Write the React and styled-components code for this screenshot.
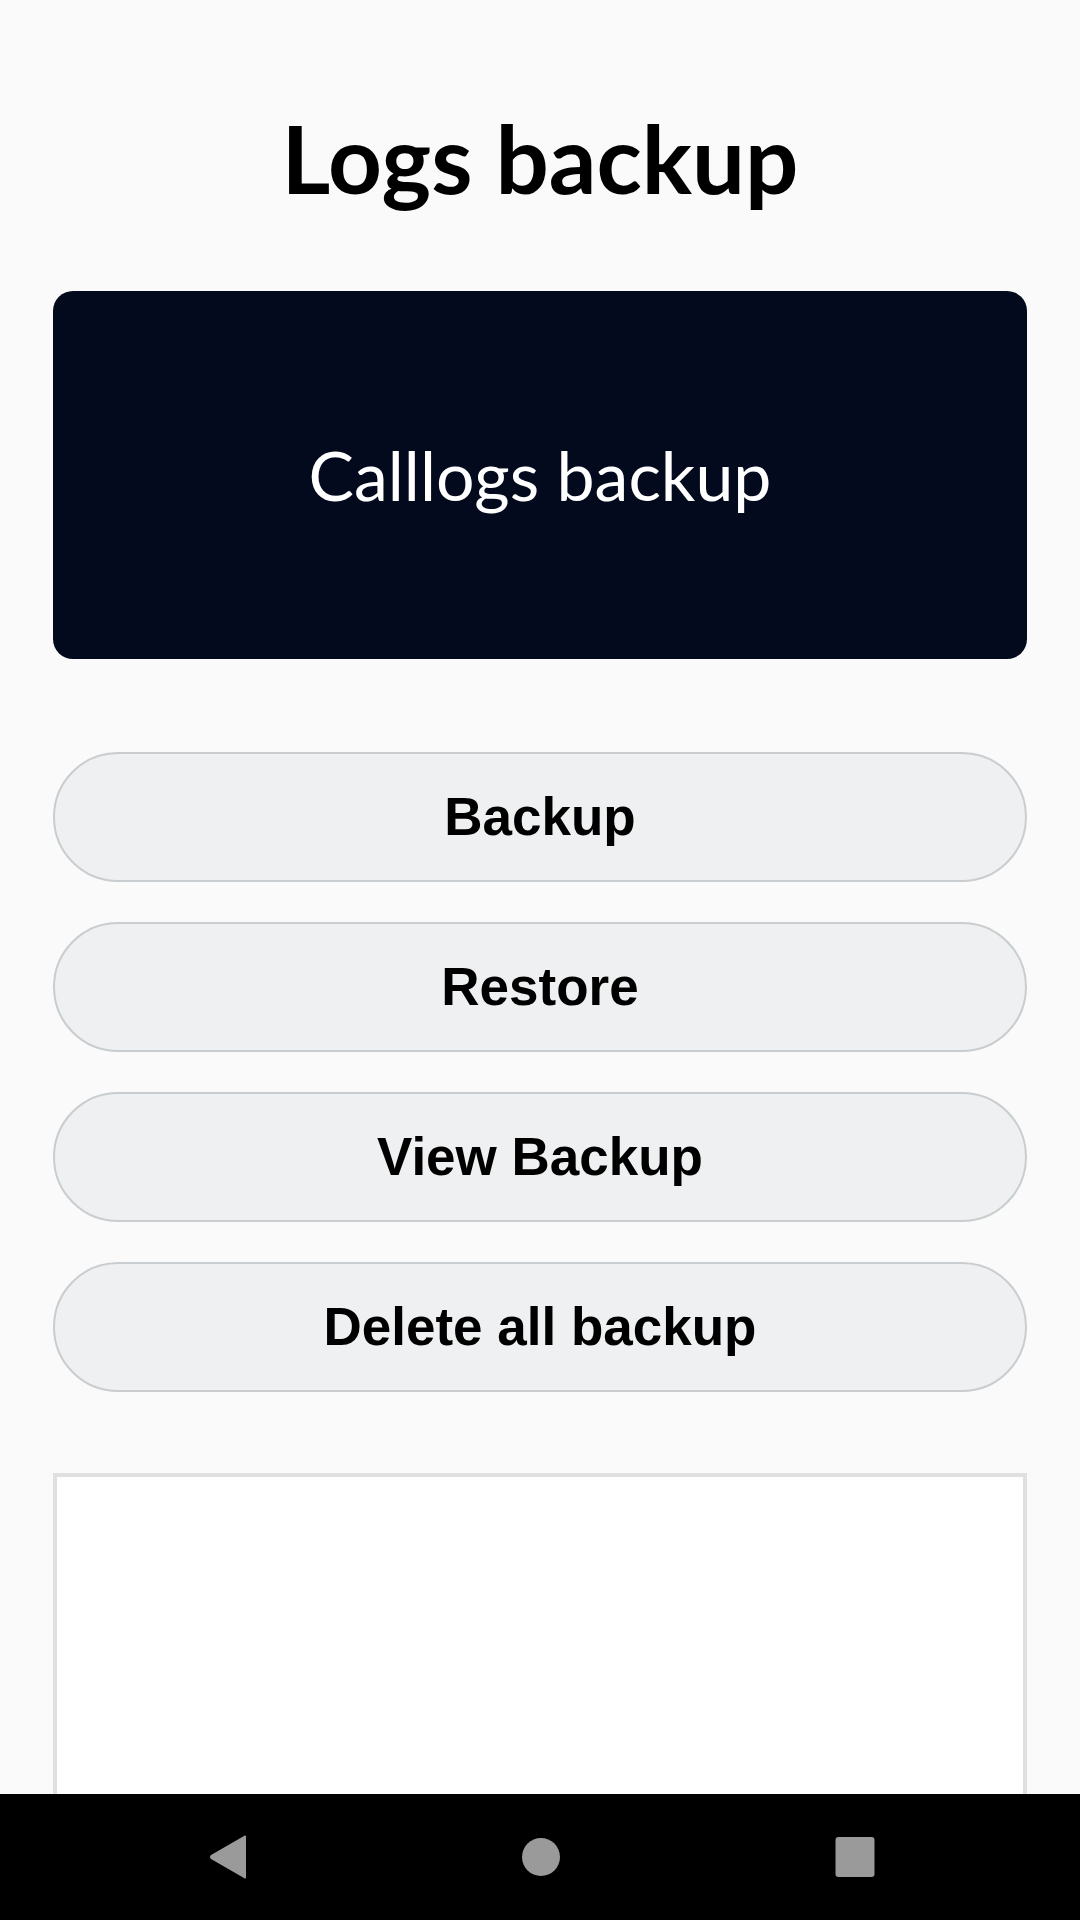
import styled, { createGlobalStyle } from 'styled-components';

const GlobalStyle = createGlobalStyle`
  html, body {
    margin: 0;
    padding: 0;
    background: #fafafa;
  }
  * {
    box-sizing: border-box;
  }
`;

const actions = ['Backup', 'Restore', 'View Backup', 'Delete all backup'];

const App = () => {
    return (
        <>
            <GlobalStyle />
            <Screen>
                <Content>
                    <Title>Logs backup</Title>
                    <Banner>
                        <BannerText>Calllogs backup</BannerText>
                    </Banner>
                    <ButtonList>
                        {actions.map((label) => (
                            <ActionButton key={label} type="button">{label}</ActionButton>
                        ))}
                    </ButtonList>
                    <ResultBox />
                </Content>
                <NavBar>
                    <NavIcon width="38" height="44" viewBox="0 0 38 44">
                        <path d="M37 1 L37 43 Q36 44 35 43 L2 24 Q0 22 2 20 L35 1 Q36 0 37 1 Z" fill="#9a9a9a" />
                    </NavIcon>
                    <NavIcon width="40" height="40" viewBox="0 0 40 40">
                        <circle cx="20" cy="20" r="19" fill="#9a9a9a" />
                    </NavIcon>
                    <NavIcon width="40" height="40" viewBox="0 0 40 40">
                        <rect x="0.5" y="0" width="39" height="40" rx="3" fill="#9a9a9a" />
                    </NavIcon>
                </NavBar>
            </Screen>
        </>
    );
};

const Screen = styled.div`
  width: 1080px;
  height: 1920px;
  display: flex;
  flex-direction: column;
  background: #fafafa;
  overflow: hidden;
`;

const Content = styled.main`
  flex: 1;
  min-height: 0;
  display: flex;
  flex-direction: column;
  padding: 102px 53px 0;
  overflow: hidden;

  & > * {
    flex-shrink: 0;
  }
`;

const Title = styled.h1`
  margin: 0;
  font-family: Lato, "Noto Sans", sans-serif;
  font-weight: 700;
  font-size: 94px;
  line-height: 1.2;
  color: #000;
  text-align: center;
`;

const Banner = styled.section`
  margin-top: 76px;
  height: 368px;
  border-radius: 20px;
  background: #040a1e;
  display: flex;
  align-items: center;
  justify-content: center;
`;

const BannerText = styled.span`
  font-family: Lato, "Noto Sans", sans-serif;
  font-weight: 400;
  font-size: 68px;
  color: #fff;
`;

const ButtonList = styled.div`
  margin-top: 93px;
  display: flex;
  flex-direction: column;
  gap: 40px;
`;

const ActionButton = styled.button`
  height: 130px;
  width: 100%;
  border: 2.5px solid #c9cdcf;
  border-radius: 65px;
  background: #eef0f1;
  font-family: "Liberation Sans", Arial, sans-serif;
  font-weight: 700;
  font-size: 53px;
  color: #000;
  cursor: pointer;
`;

const ResultBox = styled.div`
  margin-top: 81px;
  flex: 1 0 auto;
  min-height: 400px;
  background: #fff;
  border: 4px solid #e0e0e0;
  border-bottom: none;
`;

const NavBar = styled.nav`
  height: 126px;
  flex-shrink: 0;
  background: #000;
  display: flex;
  align-items: center;
  justify-content: center;
  gap: 274px;
  padding-left: 4px;
`;

const NavIcon = styled.svg`
  display: block;
`;

export default App;
